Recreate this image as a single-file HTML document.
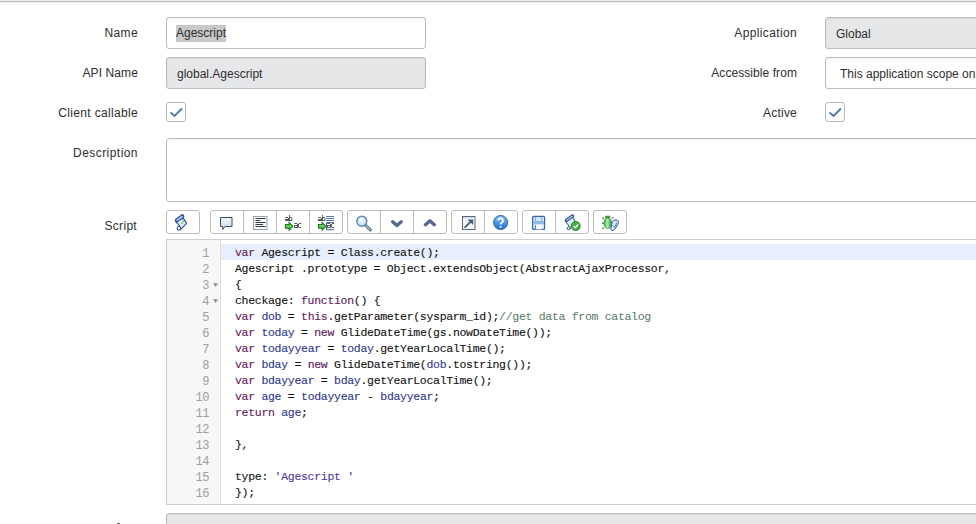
<!DOCTYPE html>
<html><head><meta charset="utf-8">
<style>
*{box-sizing:border-box;margin:0;padding:0}
html,body{width:976px;height:524px;overflow:hidden;background:#fff;font-family:"Liberation Sans",sans-serif;color:#2e2e2e}
.abs{position:absolute}
.topb{position:absolute;left:0;top:0;width:976px;height:7px;background:linear-gradient(#ebebeb 0,#ebebeb 1px,#bdbdbd 1px,#bdbdbd 2px,#f0f0f0 2px,#f0f0f0 3px,#f8f8f8 3px,#f8f8f8 5px,#fcfcfc 5px,#fcfcfc 7px)}
.lbl{position:absolute;font-size:12px;line-height:16px;white-space:nowrap;text-align:right;color:#2e2e2e}
.inp{position:absolute;height:32px;border:1px solid #bdbdbd;box-shadow:inset 0 1px 2px rgba(0,0,0,0.06);border-radius:3px;background:#fff;font-size:12px;line-height:16px;color:#2e2e2e;white-space:nowrap;overflow:hidden}
.ro{background:#e6e7e9}
.cb{position:absolute;width:20px;height:20px;border:1px solid #b9b9b9;border-radius:3px;background:#fff}
.tb{position:absolute;top:210px;height:24px;border:1px solid #bdbdbd;border-radius:3px;background:#fff;display:flex}
.tb i{display:block;width:33px;height:22px;border-left:1px solid #bdbdbd;position:relative}
.tb i:first-child{border-left:none;width:32px}
.tb svg{position:absolute;left:0;top:0}
.ed{position:absolute;left:166px;top:239px;width:820px;height:266px;border:1px solid #cfcfcf;background:#fff;overflow:hidden}
.gut{position:absolute;left:0;top:0;width:54px;height:264px;background:#f7f7f7;border-right:1px solid #dcdcdc}
.ln{position:absolute;left:0;margin-top:2px;width:41.8px;text-align:right;font-family:"Liberation Mono",monospace;font-size:12px;letter-spacing:-0.6px;line-height:16px;color:#a0a0a0}
.code{position:absolute;left:68px;top:5px;font-family:"Liberation Mono",monospace;font-size:11.5px;letter-spacing:-0.3px;line-height:16px;color:#111;white-space:pre;-webkit-text-stroke:0.1px currentColor}
.act{position:absolute;left:54px;top:4px;width:800px;height:16px;background:#e6effb}
.k{color:#63175e}.v{color:#2b3592}.c{color:#5f7f6f}.s{color:#4a38a6}
</style></head><body>
<div class="topb"></div>

<div class="lbl" style="letter-spacing:0.4px;right:838px;top:25px">Name</div>
<div class="inp" style="left:166px;top:17px;width:260px"><span style="position:absolute;left:9px;top:7px;height:17px;line-height:17px;background:#c8c8c8;padding:0 0 0 0">Agescript</span></div>
<div class="lbl" style="letter-spacing:0.1px;right:838px;top:65px">API Name</div>
<div class="inp ro" style="left:166px;top:57px;width:260px"><span style="position:absolute;left:10px;top:8px">global.Agescript</span></div>
<div class="lbl" style="letter-spacing:0.33px;right:838px;top:105px">Client callable</div>
<div class="cb" style="left:166px;top:102px"><svg width="20" height="20" style="position:absolute;left:-1px;top:-1px"><path d="M4.5 10.5 L8.5 14 L16 6.5" fill="none" stroke="#5079a8" stroke-width="1.9"/></svg></div>
<div class="lbl" style="letter-spacing:0.45px;right:838px;top:145px">Description</div>
<div class="inp" style="left:166px;top:138px;width:820px;height:64px"></div>
<div class="lbl" style="letter-spacing:0.3px;right:839px;top:218px">Script</div>

<div class="lbl" style="letter-spacing:0.36px;right:179px;top:25px">Application</div>
<div class="inp ro" style="left:825px;top:17px;width:200px"><span style="position:absolute;left:10px;top:8px">Global</span></div>
<div class="lbl" style="letter-spacing:0.07px;right:179px;top:65px">Accessible from</div>
<div class="inp" style="left:825px;top:57px;width:200px"><span style="position:absolute;left:14px;top:8px">This application scope only</span></div>
<div class="lbl" style="letter-spacing:0.2px;right:179px;top:105px">Active</div>
<div class="cb" style="left:825px;top:102px"><svg width="20" height="20" style="position:absolute;left:-1px;top:-1px"><path d="M4.5 10.5 L8.5 14 L16 6.5" fill="none" stroke="#5079a8" stroke-width="1.9"/></svg></div>

<!-- toolbar -->
<div class="tb" style="left:166px;width:34px"><i></i></div>
<div class="tb" style="left:210px;width:133px"><i></i><i></i><i></i><i></i></div>
<div class="tb" style="left:347px;width:100px"><i></i><i></i><i></i></div>
<div class="tb" style="left:451px;width:67px"><i></i><i></i></div>
<div class="tb" style="left:522px;width:67px"><i></i><i></i></div>
<div class="tb" style="left:593px;width:34px"><i></i></div>


<svg class="abs" style="left:0;top:0" width="976" height="240" viewBox="0 0 976 240">
<defs>
<linearGradient id="gb" x1="0" y1="0" x2="0" y2="1"><stop offset="0" stop-color="#eef4f9"/><stop offset="1" stop-color="#cfdeea"/></linearGradient>
<linearGradient id="hb" x1="0" y1="0" x2="0" y2="1"><stop offset="0" stop-color="#7cc0f6"/><stop offset="1" stop-color="#1f6fd2"/></linearGradient>
<linearGradient id="bug" x1="0" y1="0" x2="1" y2="0"><stop offset="0" stop-color="#3aa83a"/><stop offset="0.45" stop-color="#a8eea8"/><stop offset="1" stop-color="#2e9a2e"/></linearGradient>
<radialGradient id="mg" cx="0.4" cy="0.35" r="0.7"><stop offset="0" stop-color="#ffffff"/><stop offset="1" stop-color="#b8daf4"/></radialGradient>
</defs>
<!-- 1 scroll -->
<g>
<path d="M182.6,217 L186.6,223.4 L181,229.2 L178.4,227.6 L179.8,226.2 L175.8,221.6 Z" fill="#dcebf9" stroke="#2d4f8e" stroke-width="1.1" stroke-linejoin="round"/>
<path d="M176.8,220.4 L182.4,216.2" stroke="#2d4f8e" stroke-width="4" stroke-linecap="round"/>
<path d="M177.2,220.1 L182,216.5" stroke="#a9cbef" stroke-width="1.8" stroke-linecap="round"/>
<circle cx="178.9" cy="228.3" r="1.8" fill="#fff" stroke="#2d4f8e" stroke-width="1.1"/>
<path d="M181.6,219.6h1.8M182.6,221.4h1.8M181,223.2h1.8" stroke="#4b9a3a" stroke-width="0.9"/>
</g>
<!-- 2 comment -->
<path d="M220.5,217.5 h11.5 v9 h-7 l-2.3,3 v-3 h-2.2 z" fill="url(#gb)" stroke="#3f4a58" stroke-width="1" stroke-linejoin="round"/>
<!-- 3 format -->
<rect x="253.5" y="216.5" width="13.5" height="13" fill="#f6f8fa" stroke="#97a3b0" stroke-width="1"/>
<path d="M255.5,218.5h10M255.5,220.5h4.8M255.5,222.5h10M255.5,224.5h7.5M255.5,226.5h10" stroke="#3a3a3a" stroke-width="1"/>
<!-- 4 replace -->
<path d="M285.3,217.5h2.7M288.5,218v3.1M285.5,219.5h2.8M285.5,219.2v1.6M285.3,220.5h3M289.5,215v6.1M289.5,217.5h2.3M291.8,218v2.6M289.5,220.5h2.3" fill="none" stroke="#484848" stroke-width="0.9"/>
<path d="M285.5,224.5 h3.6 v-2 l3.8,3.8 l-3.8,3.8 v-2 h-3.6 z" fill="#5fcf5f" stroke="#1f7a1f" stroke-width="1.1"/>
<path d="M294.2,223.5h3M297.5,224v4.1M294.5,225.5h2.8M294.5,225.3v2.2M294.2,227.5h3.2M301.2,223.5h-2.4M298.5,224v3.2M298.8,227.5h2.4" fill="none" stroke="#484848" stroke-width="0.9"/>
<!-- 5 replace all -->
<path d="M318.3,217.5h2.7M321.5,218v3.1M318.5,219.5h2.8M318.5,219.2v1.6M318.3,220.5h3M322.5,215v6.1M322.5,217.5h2.3M324.8,218v2.6M322.5,220.5h2.3" fill="none" stroke="#484848" stroke-width="0.9"/>
<path d="M326,216.5h8M326,218.5h8M326,220.5h8M327,222.5h7" stroke="#5a7aa6" stroke-width="1"/>
<path d="M318.5,224.5 h3.6 v-2 l3.8,3.8 l-3.8,3.8 v-2 h-3.6 z" fill="#5fcf5f" stroke="#1f7a1f" stroke-width="1.1"/>
<path d="M327.2,223.5h3M330.5,224v4.1M327.5,225.5h2.8M327.5,225.3v2.2M327.2,227.5h3.2M334.2,223.5h-2.4M331.5,224v3.2M331.8,227.5h2.4" fill="none" stroke="#484848" stroke-width="0.9"/>
<path d="M326.5,222.5v7.2h7.5" fill="none" stroke="#3a5a8a" stroke-width="1"/>
<!-- 6 magnifier -->
<path d="M365.6,225.2 L370.4,230" stroke="#4e6478" stroke-width="3" stroke-linecap="round"/>
<path d="M365.8,225.4 L370.2,229.8" stroke="#b9c8d6" stroke-width="1.2" stroke-linecap="round"/>
<circle cx="361.8" cy="221.3" r="5" fill="url(#mg)" stroke="#5d87b0" stroke-width="1.4"/>
<!-- 7 chevron down -->
<path d="M392.6,221.8 L396.9,225.6 L401.2,221.8" fill="none" stroke="#56698e" stroke-width="3.4" stroke-linejoin="round" stroke-linecap="round"/>
<!-- 8 chevron up -->
<path d="M425.4,224.7 L429.9,220.9 L434.4,224.7" fill="none" stroke="#56698e" stroke-width="3.4" stroke-linejoin="round" stroke-linecap="round"/>
<!-- 9 fullscreen -->
<rect x="462.5" y="216.5" width="12.5" height="13" fill="#f2f6fa" stroke="#56677d" stroke-width="1"/>
<path d="M463,217.8h11.5" stroke="#c8d4e0" stroke-width="1"/>
<path d="M465.2,227.2 L470.8,221.6" stroke="#4a5a70" stroke-width="1.9" stroke-linecap="round"/>
<path d="M467.6,219.4 L473.2,219.4 L473.2,225 Z" fill="#4a5a70"/>
<!-- 10 help -->
<circle cx="500.6" cy="222.5" r="7" fill="url(#hb)" stroke="#2a5fa8" stroke-width="1"/>
<path d="M498.2,220.6 a2.4,2.2 0 1 1 3.6,1.9 c-1,0.6 -1.2,1 -1.2,2.1" fill="none" stroke="#fff" stroke-width="1.7"/>
<circle cx="500.6" cy="226.9" r="1" fill="#fff"/>
<!-- 11 save -->
<rect x="532.6" y="216.4" width="12" height="13" rx="1" fill="#d2e4f7" stroke="#3b64aa" stroke-width="1.2"/>
<path d="M535.5,216.8v4.4M541.7,216.8v4.4" stroke="#6f9ad0" stroke-width="0.8"/>
<rect x="533.3" y="221" width="10.6" height="3" fill="#8dbbe6"/>
<rect x="535" y="225" width="7.2" height="4.4" fill="#f6fafd"/>
<path d="M535.6,225.2v4" stroke="#3b64aa" stroke-width="0.9"/>
<!-- 12 scroll check -->
<g>
<path d="M572.4,217 L575,221 L570,229.4 L567.8,228 L569.2,226.4 L565.6,221.4 Z" fill="#dcebf9" stroke="#2d4f8e" stroke-width="1" stroke-linejoin="round"/>
<path d="M566.4,220.4 L572.6,215.9" stroke="#2d4f8e" stroke-width="3.2" stroke-linecap="round"/>
<path d="M566.9,220.1 L572.2,216.2" stroke="#b3d2f2" stroke-width="1.3" stroke-linecap="round"/>
<circle cx="568.6" cy="228.4" r="1.4" fill="#fff" stroke="#2d4f8e" stroke-width="1"/>
<circle cx="575.7" cy="226" r="4.5" fill="#46b046" stroke="#237f23" stroke-width="0.9"/>
<path d="M573.6,226 L575.2,227.7 L578.1,224.5" fill="none" stroke="#fff" stroke-width="1.3"/>
</g>
<!-- 13 bug -->
<g>
<path d="M602,218.2h2.2M601.8,223.2h2.4M602,228.2h2.2M611.6,218.4l2.2,-0.8" stroke="#3a3a3a" stroke-width="0.9"/>
<ellipse cx="607.7" cy="223" rx="3.9" ry="5.6" fill="url(#bug)" stroke="#2f8a2f" stroke-width="0.6"/>
<rect x="605.2" y="215.8" width="5" height="2.6" rx="0.8" fill="#3a9a3a"/>
<path d="M615,219.9 C618.3,219.4 619.1,222.2 617.9,224.4 L614.6,229.5 C613.4,231 610.3,230.8 610.8,228.4 L611.5,224.8 C611.9,222.2 613,220.3 615,219.9 Z" fill="#d3e3f8" stroke="#2d4f9e" stroke-width="1" stroke-linejoin="round"/>
<path d="M612.6,225.4 L614.6,227.4 L617,222.6" fill="none" stroke="#3d5fae" stroke-width="0.8"/>
</g>
</svg>

<!-- editor -->
<div class="ed">
 <div class="gut"></div>
 <div class="act"></div>
 <div class="ln" style="top:4px">1</div>
 <div class="ln" style="top:20px">2</div>
 <div class="ln" style="top:36px">3</div>
 <svg class="abs" style="left:46px;top:43px" width="6" height="5"><path d="M0,0.2 L5,0.2 L2.5,4 Z" fill="#8f8f8f"/></svg>
 <div class="ln" style="top:52px">4</div>
 <svg class="abs" style="left:46px;top:59px" width="6" height="5"><path d="M0,0.2 L5,0.2 L2.5,4 Z" fill="#8f8f8f"/></svg>
 <div class="ln" style="top:68px">5</div>
 <div class="ln" style="top:84px">6</div>
 <div class="ln" style="top:100px">7</div>
 <div class="ln" style="top:116px">8</div>
 <div class="ln" style="top:132px">9</div>
 <div class="ln" style="top:148px">10</div>
 <div class="ln" style="top:164px">11</div>
 <div class="ln" style="top:180px">12</div>
 <div class="ln" style="top:196px">13</div>
 <div class="ln" style="top:212px">14</div>
 <div class="ln" style="top:228px">15</div>
 <div class="ln" style="top:244px">16</div>
<div class="code"><span class="k">var</span> Agescript = Class.create();
Agescript .prototype = Object.extendsObject(AbstractAjaxProcessor,
{
checkage: <span class="k">function</span>() {
<span class="k">var</span> <span class="v">dob</span> = <span class="k">this</span>.getParameter(sysparm_id);<span class="c">//get data from catalog</span>
<span class="k">var</span> <span class="v">today</span> = <span class="k">new</span> GlideDateTime(gs.nowDateTime());
<span class="k">var</span> <span class="v">todayyear</span> = <span class="v">today</span>.getYearLocalTime();
<span class="k">var</span> <span class="v">bday</span> = <span class="k">new</span> GlideDateTime(<span class="v">dob</span>.tostring());
<span class="k">var</span> <span class="v">bdayyear</span> = <span class="v">bday</span>.getYearLocalTime();
<span class="k">var</span> <span class="v">age</span> = <span class="v">todayyear</span> - <span class="v">bdayyear</span>;
<span class="k">return</span> <span class="v">age</span>;

},

type: <span class="s">'Agescript '</span>
});</div>
</div>

<div class="inp ro" style="left:166px;top:513px;width:820px;height:32px"></div>
<div class="abs" style="left:117px;top:523px;width:3px;height:1px;background:#6a6a6a"></div>
</body></html>
